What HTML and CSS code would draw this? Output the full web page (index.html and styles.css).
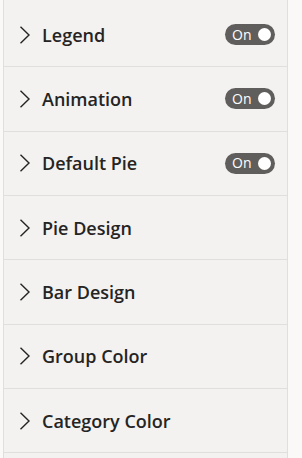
FILE: index.html
```html
<!DOCTYPE html>
<html lang="en">
  <head>
    <meta charset="UTF-8" />
    <meta name="viewport" content="width=device-width, initial-scale=1.0" />
    <title>Format pane</title>
    <link rel="stylesheet" href="styles.css">
  </head>
  <body>
    <div class="pane">
      <div class="card">
        <div class="card-header">
          <svg class="chevron" viewBox="0 0 12 18"><path d="M1.5 0.8 L10 9 L1.5 17.2" /></svg>
          <span class="card-title">Legend</span>
          <span class="toggle">On<span class="knob"></span></span>
        </div>
      </div>
      <div class="card">
        <div class="card-header">
          <svg class="chevron" viewBox="0 0 12 18"><path d="M1.5 0.8 L10 9 L1.5 17.2" /></svg>
          <span class="card-title">Animation</span>
          <span class="toggle">On<span class="knob"></span></span>
        </div>
      </div>
      <div class="card">
        <div class="card-header">
          <svg class="chevron" viewBox="0 0 12 18"><path d="M1.5 0.8 L10 9 L1.5 17.2" /></svg>
          <span class="card-title">Default Pie</span>
          <span class="toggle">On<span class="knob"></span></span>
        </div>
      </div>
      <div class="card">
        <div class="card-header">
          <svg class="chevron" viewBox="0 0 12 18"><path d="M1.5 0.8 L10 9 L1.5 17.2" /></svg>
          <span class="card-title">Pie Design</span>
        </div>
      </div>
      <div class="card">
        <div class="card-header">
          <svg class="chevron" viewBox="0 0 12 18"><path d="M1.5 0.8 L10 9 L1.5 17.2" /></svg>
          <span class="card-title">Bar Design</span>
        </div>
      </div>
      <div class="card">
        <div class="card-header">
          <svg class="chevron" viewBox="0 0 12 18"><path d="M1.5 0.8 L10 9 L1.5 17.2" /></svg>
          <span class="card-title">Group Color</span>
        </div>
      </div>
      <div class="card">
        <div class="card-header">
          <svg class="chevron" viewBox="0 0 12 18"><path d="M1.5 0.8 L10 9 L1.5 17.2" /></svg>
          <span class="card-title">Category Color</span>
        </div>
      </div>
    </div>
  </body>
</html>
```

FILE: styles.css
```css
body {
  margin: 0;
  background-color: #faf9f8;
  font-family: 'Open Sans', 'Noto Sans', sans-serif;
  color: #252423;
  height: 458px;
  overflow: hidden;
}
/* Format pane */
.pane {
  margin-left: 3px;
  width: 283px;
  height: 458px;
  padding-top: 3px;
  background-color: #f3f2f1;
  border-left: 1px solid #e1dfdd;
  border-right: 1px solid #e1dfdd;
}
.card {
  height: 63.33px;
  border-bottom: 1px solid #e1dfdd;
}
.card-header {
  height: 100%;
  display: flex;
  align-items: center;
  padding: 0 12px 0 15px;
}
.chevron {
  width: 12px;
  height: 18px;
  flex: none;
}
.chevron path {
  fill: none;
  stroke: #252423;
  stroke-width: 1.4;
  stroke-linejoin: miter;
}
.card-title {
  margin-left: 11px;
  font-size: 18px;
  font-weight: 600;
  flex: 1;
}
.toggle {
  display: flex;
  align-items: center;
  justify-content: space-between;
  width: 50px;
  height: 21px;
  box-sizing: border-box;
  padding: 0 4px 0 7px;
  border-radius: 11px;
  background-color: #605e5c;
  color: #ffffff;
  font-size: 14px;
  line-height: 1;
}
.knob {
  width: 13px;
  height: 13px;
  border-radius: 50%;
  background-color: #ffffff;
}
```
